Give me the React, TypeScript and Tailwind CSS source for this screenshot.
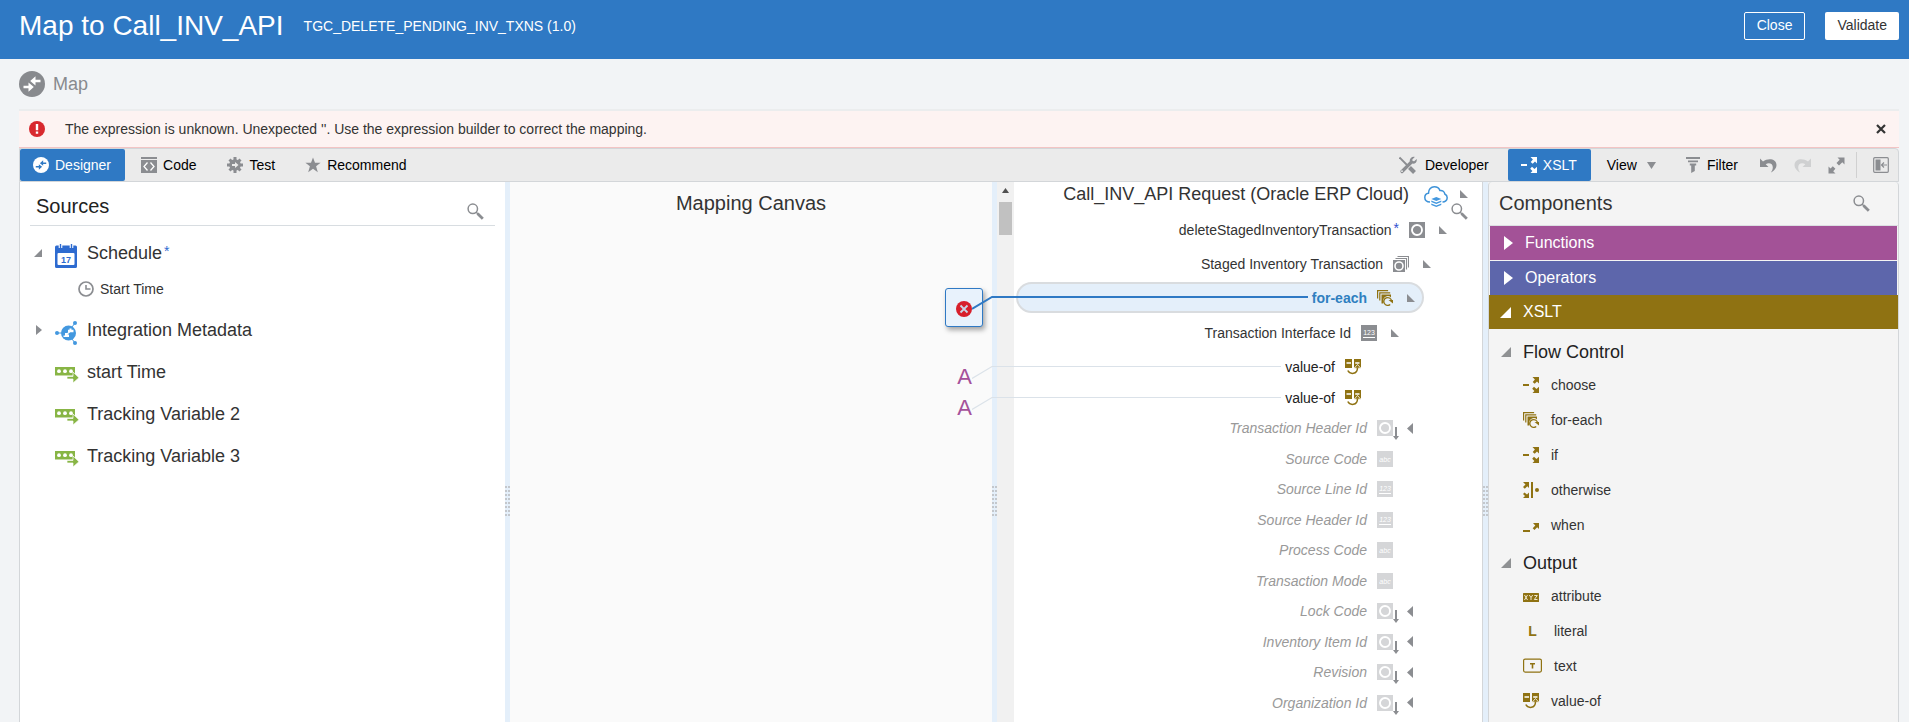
import type { ReactNode } from "react";

const GREY = "#8b8d91";
const GOLD = "#8f7212";

/* ---------- arrows and glyphs ---------- */

const EXCHANGE = "M11.200 10L16.500 5.200V8.800H21.500V11.200H16.500V14.400zM14.800 16L9.500 20.800V17.200H4.500V14.800H9.500V11.600z";

function MapIcon() {
  return (
    <svg className="size-[26px]" viewBox="0 0 26 26" aria-hidden="true">
      <circle cx="13" cy="13" r="13" fill="#888a8e" />
      <path d={EXCHANGE} fill="#fff" />
    </svg>
  );
}

function DesignerIcon() {
  return (
    <svg className="size-4" viewBox="0 0 26 26" aria-hidden="true">
      <circle cx="13" cy="13" r="13" fill="#fff" />
      <path d={EXCHANGE} fill="#2f79c4" />
    </svg>
  );
}

function CodeIcon() {
  return (
    <svg className="size-4" viewBox="0 0 16 16" aria-hidden="true">
      <path d="M0 0h16v2H0zM0 3h16v13H0z" fill={GREY} />
      <path d="M6.500 5.500L3 9.500l3.500 4M9.500 5.500L13 9.500l-3.500 4" fill="none" stroke="#fff" strokeWidth="1.300" />
    </svg>
  );
}

function TestIcon() {
  return (
    <svg className="size-4" viewBox="0 0 16 16" aria-hidden="true">
      <g stroke={GREY} strokeWidth="3">
        <path d="M8 0v16M0 8h16M2.500 2.500l11 11M13.500 2.500l-11 11" />
      </g>
      <circle cx="8" cy="8" r="5.800" fill={GREY} />
      <path d="M5 7h3V5l3.500 3L8 11V9H5z" fill="#ebebeb" />
    </svg>
  );
}

function StarIcon() {
  return (
    <svg className="size-4" viewBox="0 0 16 16" aria-hidden="true">
      <path d="M8 .5l2 5.300h5.600l-4.500 3.500 1.700 6L8 11.800l-4.800 3.500 1.700-6L.4 5.800H6z" fill={GREY} />
    </svg>
  );
}

function DeveloperIcon() {
  return (
    <svg className="size-[18px]" viewBox="0 0 18 18" aria-hidden="true">
      <path d="M.5 1.500l8 8" stroke={GREY} strokeWidth="1.800" />
      <path d="M10.500 11.500l5 5" stroke={GREY} strokeWidth="4" />
      <path d="M3 15.500l9-9" stroke={GREY} strokeWidth="3.200" strokeLinecap="round" />
      <path d="M15.800.9l-2.500 2.500.3 1.600 1.600.3 2.500-2.300c.6 3-1.700 5.200-4.700 4.500L10.800 5.500C10.300 2.500 12.800.2 15.800.9z" fill={GREY} />
      <circle cx="3" cy="15.200" r=".9" fill="#ebebeb" />
    </svg>
  );
}

function Branch({ color }: { color: string }) {
  return (
    <svg className="size-4 shrink-0" viewBox="0 0 16 16" aria-hidden="true">
      <path d="M0 7h6v2H0z" fill={color} />
      <path d="M9.500 0h6.500v6.500l-2-1.900-2.300 2.200-2-1.900 2.200-2.400z" fill={color} />
      <path d="M16 16H9.500l1.900-2-2.200-2.300 1.800-1.900 2.500 2.200 2.500-2.200z" fill={color} />
    </svg>
  );
}

function OtherwiseIcon() {
  return (
    <svg className="size-4" viewBox="0 0 16 16" aria-hidden="true">
      <g fill={GOLD}>
        <path d="M0 0h6v6L4.300 4.300 1.800 6.800 0 5l2.500-2.500zM6 16H0l2-2-2-2 1.500-1.500 2.500 2 2-2zM8 0h2v16H8z" />
        <circle cx="14" cy="8" r="2" />
      </g>
    </svg>
  );
}

function WhenIcon() {
  return (
    <svg className="size-4" viewBox="0 0 16 16" aria-hidden="true">
      <path d="M0 13h7v2H0zM10 6h6v6l-1.800-1.700L11.500 13 9.700 11.200l2.600-2.600z" fill={GOLD} />
    </svg>
  );
}

function ForEachIcon() {
  return (
    <svg className="size-4 shrink-0" viewBox="0 0 16 16" aria-hidden="true">
      <path d="M.6 8.500V.6h10.500M2.800 10.500V2.900h10.400" fill="none" stroke={GOLD} strokeWidth="1.200" />
      <path d="M4.500 4.500h9.500v3a4.500 4.500 0 0 0-7.500 4.500l-.500 1.500H4.500z" fill={GOLD} />
      <path d="M14.500 10.500a3.900 3.900 0 1 0-1.300 4" fill="none" stroke={GOLD} strokeWidth="1.300" />
      <path d="M11.500 10h4.500v3.500z" fill={GOLD} />
    </svg>
  );
}

function ValueOfIcon() {
  return (
    <svg className="size-4 shrink-0" viewBox="0 0 16 16" aria-hidden="true">
      <path d="M0 0h7v9H0zM9 0h7v9H9z" fill={GOLD} />
      <path d="M1.500 4h4.500M10.200 4h4.300" stroke="#fff" strokeWidth="1.300" />
      <path d="M12.500 5.500l-3.300 3.700h6.600z" fill={GOLD} stroke="#fff" strokeWidth=".8" />
      <path d="M2.800 11.500c2 4 9.700 4.500 9.700-3" fill="none" stroke={GOLD} strokeWidth="1.500" />
    </svg>
  );
}

function AttributeIcon() {
  return (
    <svg className="size-4" viewBox="0 0 16 16" aria-hidden="true">
      <rect y="5" width="16" height="9" rx=".5" fill={GOLD} />
      <path d="M1.500 7l3 5M4.500 7l-3 5M6.300 7L8 9.500 9.700 7M8 9.500V12M11.300 7.500h3l-3 4h3.200" fill="none" stroke="#f0e8d0" strokeWidth="1" />
    </svg>
  );
}

function TextIcon() {
  return (
    <svg className="h-[15px] w-[19px]" viewBox="0 0 19 15" aria-hidden="true">
      <rect x=".6" y="1.100" width="17.800" height="13" rx="1.500" fill="none" stroke={GOLD} strokeWidth="1.200" />
      <path d="M7 5h5v1.500h-1.700V10.500H8.700V6.500H7z" fill={GOLD} />
    </svg>
  );
}

function RingIcon({ faded = false }: { faded?: boolean }) {
  return (
    <svg className="size-4 shrink-0" viewBox="0 0 16 16" aria-hidden="true">
      <rect width="16" height="16" fill={faded ? "#d5d6d8" : GREY} />
      <circle cx="8" cy="8" r="5" fill="none" stroke="#fff" strokeWidth="1.900" />
    </svg>
  );
}

function StackedRingIcon() {
  return (
    <svg className="size-4 shrink-0" viewBox="0 0 16 16" aria-hidden="true">
      <path d="M4.500.5H15.500V11.500M2.500 2.500H13.500V13.500" fill="none" stroke={GREY} strokeWidth="1.100" />
      <rect y="4" width="12" height="12" fill={GREY} />
      <circle cx="6" cy="10" r="4" fill={GREY} stroke="#fff" strokeWidth="1.600" />
    </svg>
  );
}

function TypeIcon({ text, faded = false }: { text: "123" | "abc"; faded?: boolean }) {
  return (
    <svg className="size-4 shrink-0" viewBox="0 0 16 16" aria-hidden="true">
      <rect width="16" height="16" fill={faded ? "#d5d6d8" : GREY} />
      <text
        x="8"
        y={text === "123" ? 10 : 11}
        textAnchor="middle"
        fontFamily="Liberation Sans, sans-serif"
        fontSize="7"
        fill="#fff"
      >
        {text}
      </text>
      {text === "123" && <path d="M2 12.500h12" stroke="#fff" strokeWidth="1" />}
    </svg>
  );
}

function SearchIcon() {
  return (
    <svg className="size-[17px]" viewBox="0 0 17 17" aria-hidden="true">
      <circle cx="5.800" cy="5.800" r="4.700" fill="none" stroke={GREY} strokeWidth="1.500" />
      <path d="M9 9l2 2" stroke={GREY} strokeWidth="1.400" />
      <path d="M10.500 10.500l5.300 5.300" stroke={GREY} strokeWidth="2.800" />
    </svg>
  );
}

function CalendarIcon() {
  return (
    <svg className="h-6 w-[22px]" viewBox="0 0 22 24" aria-hidden="true">
      <path d="M1.500 1.500H20.500A1.500 1.500 0 0 1 22 3v19.500A1.500 1.500 0 0 1 20.500 24h-19A1.500 1.500 0 0 1 0 22.500V3a1.500 1.500 0 0 1 1.500-1.500z" fill="#2e6bd0" />
      <rect x="2.500" y="9" width="17" height="12" rx="1" fill="#fff" />
      <path d="M5.500 0v4M16.500 0v4" stroke="#fff" strokeWidth="3.600" />
      <path d="M5.500 0v4M16.500 0v4" stroke="#2e6bd0" strokeWidth="1.400" />
      <text x="11" y="18.500" textAnchor="middle" fontFamily="Liberation Sans, sans-serif" fontWeight="bold" fontSize="9" fill="#2e6bd0">
        17
      </text>
    </svg>
  );
}

function MetadataIcon() {
  return (
    <svg className="h-6 w-[22px]" viewBox="0 0 22 24" aria-hidden="true">
      <g fill="#4398df">
        <circle cx="13.500" cy="12" r="7.500" />
        <circle cx="2" cy="12" r="2" />
        <circle cx="20" cy="2" r="2" />
        <circle cx="20" cy="22" r="2" />
      </g>
      <path d="M2 12h4M20 2l-3 4M20 22l-3-4" stroke="#4398df" />
      <path d="M13 8.800h1.500v-1.300h2v1.300h2v2.400h-5.500zM8.500 14.500h1.500V12h2.500v1.500h1.500v2.400h-5.500z" fill="#fff" />
      <path d="M11.500 13.500l3.500-3" stroke="#fff" strokeWidth="1.200" />
    </svg>
  );
}

function VariableIcon() {
  return (
    <svg className="h-4 w-6" viewBox="0 0 24 16" aria-hidden="true">
      <path d="M0 0h20v8.500H0z" fill="#88b545" />
      <g fill="#fff">
        <circle cx="4" cy="4.200" r="1.900" />
        <circle cx="10" cy="4.200" r="1.900" />
        <circle cx="16" cy="4.200" r="1.900" />
      </g>
      <path d="M12 9.400h6V5l6 5.700-6 5.300v-4h-6z" fill="#88b545" stroke="#fff" strokeWidth=".7" />
    </svg>
  );
}

function CloudIcon() {
  return (
    <svg className="h-[22px] w-6" viewBox="0 0 24 22" aria-hidden="true">
      <path
        d="M6 16C2.500 16 .8 14 .8 11.500S2.700 7.400 4.500 7.200C4.500 3.500 7 .8 10.300.8c2.700 0 4.800 1.500 5.600 3.700 2.600-.5 4.700 1.300 4.900 3.500 1.500.7 2.400 2 2.400 3.700C23.200 14.300 21 16 18.500 16"
        fill="none"
        stroke="#3d92d8"
        strokeWidth="1.500"
      />
      <path d="M12.300 11l5 2-5 2-5-2zM7.300 14.500l5 2 5-2v1.600l-5 2-5-2zM7.300 17.500l5 2 5-2v1.600l-5 2-5-2z" fill="#4398df" />
    </svg>
  );
}

function ClockIcon() {
  return (
    <svg className="size-4" viewBox="0 0 16 16" aria-hidden="true">
      <circle cx="8" cy="8" r="7" fill="none" stroke={GREY} strokeWidth="1.700" />
      <path d="M8 4v4h4.500" fill="none" stroke={GREY} strokeWidth="1.600" />
    </svg>
  );
}

type TriangleKind = "openLeft" | "openRight" | "right" | "left";

function Triangle({ kind, className }: { kind: TriangleKind; className: string }) {
  const shapes: Record<TriangleKind, string> = {
    openLeft: "M10 0v10H0z",
    openRight: "M0 0l10 10H0z",
    right: "M0 0l10 5L0 10z",
    left: "M10 0L0 5l10 5z",
  };
  return (
    <svg className={className} viewBox="0 0 10 10" preserveAspectRatio="none" fill="currentColor" aria-hidden="true">
      <path d={shapes[kind]} />
    </svg>
  );
}

/* ---------- shared pieces ---------- */

function Splitter() {
  return (
    <div className="w-[5px] shrink-0 bg-[#e4effa] pt-76" role="separator" aria-orientation="vertical">
      <svg className="h-8 w-[5px]" viewBox="0 0 5 32" fill="#c3c7cc" aria-hidden="true">
        {[0, 4, 8, 12, 16, 20, 24, 28].map((y) => (
          <path key={y} d={`M0 ${y}h2v2H0zM3 ${y}h2v2H3z`} />
        ))}
      </svg>
    </div>
  );
}

function ToolbarButton({ icon, label, className }: { icon: ReactNode; label: string; className: string }) {
  return (
    <button type="button" className={`flex h-8 items-center text-sm ${className}`}>
      {icon}
      {label}
    </button>
  );
}

/* ---------- header, banner, toolbar ---------- */

function Header() {
  return (
    <header className="flex h-[59px] items-start bg-[#2f79c4] pr-2.5 pl-[19px] text-white">
      <h1 className="text-[28px] leading-[52px]">Map to Call_INV_API</h1>
      <span className="ml-5 text-sm leading-[52px]">TGC_DELETE_PENDING_INV_TXNS (1.0)</span>
      <div className="mt-3 ml-auto flex gap-5">
        <button type="button" className="h-7 rounded-[2px] border border-white px-3 pb-0.5 text-sm">
          Close
        </button>
        <button type="button" className="h-7 rounded-[2px] bg-white px-3 pb-0.5 text-sm text-[#333]">
          Validate
        </button>
      </div>
    </header>
  );
}

function ErrorBanner() {
  return (
    <div role="alert" className="flex h-[39px] items-center border-t-2 border-b border-t-[#ebedee] border-b-[#f3c4c4] bg-[#fdf3f2] pr-[13px] pl-2.5">
      <svg className="size-4" viewBox="0 0 16 16" aria-hidden="true">
        <circle cx="8" cy="8" r="8" fill="#d8292f" />
        <path d="M6.800 3h2.400v6.200H6.800zM6.800 10.500h2.400v2.300H6.800z" fill="#fff" />
      </svg>
      <p className="ml-5 text-sm text-[#333]">
        The expression is unknown. Unexpected ''. Use the expression builder to correct the mapping.
      </p>
      <button type="button" aria-label="Dismiss" className="ml-auto">
        <svg className="size-[10px]" viewBox="0 0 10 10" aria-hidden="true">
          <path d="M1 1l8 8M9 1L1 9" stroke="#333" strokeWidth="2.200" />
        </svg>
      </button>
    </div>
  );
}

function Toolbar() {
  return (
    <div className="flex h-[34px] items-center rounded-tr border border-[#d3d6d9] bg-[#ebebeb] text-black">
      <ToolbarButton className="gap-1.5 rounded-[2px] bg-[#2f79c4] pr-3.5 pl-[13px] text-white" icon={<DesignerIcon />} label="Designer" />
      <ToolbarButton className="ml-4 gap-1.5" icon={<CodeIcon />} label="Code" />
      <ToolbarButton className="ml-[30px] gap-[7px]" icon={<TestIcon />} label="Test" />
      <ToolbarButton className="ml-[30px] gap-1.5" icon={<StarIcon />} label="Recommend" />

      <div className="ml-auto flex h-8 items-center">
        <ToolbarButton className="gap-2" icon={<DeveloperIcon />} label="Developer" />
        <ToolbarButton className="ml-[19px] gap-1.5 rounded-[2px] bg-[#2f79c4] pr-3.5 pl-[13px] text-white" icon={<Branch color="#fff" />} label="XSLT" />
        <button type="button" className="ml-4 flex items-center gap-2.5 text-sm">
          View
          <svg className="h-[7px] w-[9px]" viewBox="0 0 9 7" aria-hidden="true">
            <path d="M0 0h9L4.500 7z" fill={GREY} />
          </svg>
        </button>
        <ToolbarButton
          className="ml-[30px] gap-[7px]"
          icon={
            <svg className="h-4 w-[14px]" viewBox="0 0 14 16" aria-hidden="true">
              <path d="M0 1h14M2 4.300h10M3.800 7.500h6.400" stroke={GREY} strokeWidth="1.800" />
              <path d="M5.200 7h3.600v7l-3.600 2z" fill={GREY} />
            </svg>
          }
          label="Filter"
        />
        <button type="button" aria-label="Undo" className="ml-[22px]">
          <svg className="size-[17px]" viewBox="0 0 17 17" aria-hidden="true">
            <path d="M0 1.500V10h8.500L5.700 7.200C9 5.200 13 6.500 12.800 10.500c-.1 2-.8 3.500-1.800 5 2.500-1.500 5.500-4 5.500-7.500C16.500 2 8.500.5 3 4.500z" fill={GREY} />
          </svg>
        </button>
        <button type="button" aria-label="Redo" disabled className="ml-[17px]">
          <svg className="size-[17px]" viewBox="0 0 17 17" aria-hidden="true">
            <path transform="translate(17 0) scale(-1 1)" d="M0 1.500V10h8.500L5.700 7.200C9 5.200 13 6.500 12.800 10.500c-.1 2-.8 3.500-1.800 5 2.500-1.500 5.500-4 5.500-7.500C16.500 2 8.500.5 3 4.500z" fill="#cfd0d1" />
          </svg>
        </button>
        <button type="button" aria-label="Maximize" className="ml-[17px]">
          <svg className="size-[17px]" viewBox="0 0 17 17" aria-hidden="true">
            <path d="M9.500.5h7v7l-2.200-2.200-3.300 3.200-2.500-2.500 3.200-3.300zM7.500 16.500h-7v-7l2 2L4.800 9.200l2.600 2.600-2.200 2.400z" fill={GREY} />
          </svg>
        </button>
        <span className="mr-4 ml-[11px] h-[26px] w-px bg-[#d0d0d0]" />
        <button type="button" aria-label="Toggle components panel" className="mr-[9px]">
          <svg className="size-4" viewBox="0 0 16 16" aria-hidden="true">
            <rect x=".7" y=".7" width="14.600" height="14.600" rx="1" fill="none" stroke={GREY} strokeWidth="1.200" />
            <path d="M2.500 2.500h5v11h-5z" fill={GREY} />
            <path d="M9 8h5M11 5.500L8.500 8l2.500 2.500" fill="none" stroke={GREY} strokeWidth="1.200" />
          </svg>
        </button>
      </div>
    </div>
  );
}

/* ---------- sources ---------- */

function SourceRow({ toggle, icon, label, required }: { toggle?: ReactNode; icon: ReactNode; label: string; required?: boolean }) {
  return (
    <div className="flex h-[42px] items-center pl-[14px]">
      <span className="w-[21px]">{toggle}</span>
      <span className="flex w-8 pt-1.5">{icon}</span>
      <span className="text-lg">{label}</span>
      {required && <span className="mb-1 ml-0.5 text-sm text-[#2e6bd0]">*</span>}
    </div>
  );
}

function Sources() {
  return (
    <section className="min-w-0 flex-[485_1_0px] border-l border-[#d3d6d9] bg-white">
      <div className="mr-2.5 ml-2.5 flex h-11 items-start justify-between border-b border-[#d8dde1] pr-[11px] pl-1.5">
        <h2 className="text-xl leading-[48px] text-[#222]">Sources</h2>
        <button type="button" aria-label="Search sources" className="mt-[21px]">
          <SearchIcon />
        </button>
      </div>
      <ul className="pt-1.5 text-[#333]">
        <li>
          <SourceRow
            toggle={
              <button type="button" aria-label="Collapse Schedule" className="block text-[#8b8d91]">
                <Triangle kind="openLeft" className="size-2" />
              </button>
            }
            icon={<CalendarIcon />}
            label="Schedule"
            required
          />
          <ul>
            <li className="flex h-[30px] items-center gap-1.5 pl-[58px] text-sm">
              <ClockIcon />
              Start Time
            </li>
          </ul>
        </li>
        <li className="mt-[5px]">
          <SourceRow
            toggle={
              <button type="button" aria-label="Expand Integration Metadata" className="ml-0.5 block text-[#8b8d91]">
                <Triangle kind="right" className="h-2.5 w-1.5" />
              </button>
            }
            icon={<MetadataIcon />}
            label="Integration Metadata"
          />
        </li>
        {["start Time", "Tracking Variable 2", "Tracking Variable 3"].map((name) => (
          <li key={name}>
            <SourceRow icon={<VariableIcon />} label={name} />
          </li>
        ))}
      </ul>
    </section>
  );
}

/* ---------- canvas ---------- */

function MappingCanvas() {
  return (
    <section className="relative min-w-0 flex-[482_1_0px] bg-[#fafafa]">
      <h2 className="pt-[7px] text-center text-xl leading-7 text-[#333]">Mapping Canvas</h2>
      <button
        type="button"
        aria-label="Mapping error"
        className="absolute top-[106px] right-[9px] flex h-[39px] w-[38px] items-center justify-center rounded-[3px] border border-[#2f79c4] bg-[#e8f2fc] shadow-[2px_3px_5px_rgba(0,0,0,0.35)]"
      >
        <svg className="mt-0.5 size-4" viewBox="0 0 16 16" aria-hidden="true">
          <circle cx="8" cy="8" r="8" fill="#d71f2b" />
          <path d="M4.500 4.500l7 7M11.500 4.500l-7 7" stroke="#c9d6e6" strokeWidth="1.800" />
        </svg>
      </button>
      <span className="absolute top-[181px] right-5 text-[22px] leading-7 text-[#a5519a]">A</span>
      <span className="absolute top-[212px] right-5 text-[22px] leading-7 text-[#a5519a]">A</span>
    </section>
  );
}

/* ---------- target ---------- */

function ActiveConnector() {
  return (
    <svg className="absolute top-3 -left-[46px] z-10 h-[14px] w-[46px]" viewBox="0 0 46 14" aria-hidden="true">
      <path d="M0 13L20 1h26" fill="none" stroke="#2f79c4" strokeWidth="2" />
    </svg>
  );
}

function Connector() {
  return (
    <svg className="absolute top-[14px] -left-[42px] z-10 h-[14px] w-[42px]" viewBox="0 0 42 14" aria-hidden="true">
      <path d="M0 13.500L20 1.500h22" fill="none" stroke="#dbe2e9" strokeWidth="1.200" />
    </svg>
  );
}

function MoreIcon() {
  return (
    <span className="relative">
      <RingIcon faded />
      <svg className="absolute top-[7px] -right-1.5 h-[13px] w-1.5" viewBox="0 0 6 13" aria-hidden="true">
        <path d="M2 0h2v9h2l-3 4-3-4h2z" fill={GREY} />
      </svg>
    </span>
  );
}

function OpenToggle({ label }: { label: string }) {
  return (
    <button type="button" aria-label={`Collapse ${label}`} className="text-[#8b8d91]">
      <Triangle kind="openRight" className="size-2" />
    </button>
  );
}

const unmapped: { name: string; kind: "more" | "abc" | "123" }[] = [
  { name: "Transaction Header Id", kind: "more" },
  { name: "Source Code", kind: "abc" },
  { name: "Source Line Id", kind: "123" },
  { name: "Source Header Id", kind: "123" },
  { name: "Process Code", kind: "abc" },
  { name: "Transaction Mode", kind: "abc" },
  { name: "Lock Code", kind: "more" },
  { name: "Inventory Item Id", kind: "more" },
  { name: "Revision", kind: "more" },
  { name: "Organization Id", kind: "more" },
];

function Target() {
  return (
    <section className="flex min-w-0 flex-[485_1_0px] border-r border-[#d3d6d9] bg-white">
      <div className="flex w-[17px] shrink-0 flex-col items-center bg-[#f1f1f1] pt-1.5">
        <svg className="h-[5px] w-[7px]" viewBox="0 0 7 5" aria-hidden="true">
          <path d="M3.500 0L7 5H0z" fill="#505050" />
        </svg>
        <span className="mt-[9px] h-[33px] w-[13px] bg-[#c1c1c1]" />
      </div>
      <div className="relative min-w-0 flex-1 text-sm text-[#333]">
        <div className="mb-[7px] flex h-6 items-center justify-end pr-[14px] whitespace-nowrap">
          <h2 className="text-lg leading-6 text-[#333]">Call_INV_API Request (Oracle ERP Cloud)</h2>
          <span className="ml-[15px] pt-1.5">
            <CloudIcon />
          </span>
          <span className="ml-3 flex">
            <OpenToggle label="Call_INV_API Request" />
          </span>
        </div>
        <button type="button" aria-label="Search target" className="absolute top-[21px] right-[14px]">
          <SearchIcon />
        </button>

        <ul>
          <li className="flex h-[34px] items-center justify-end pr-[35px]">
            deleteStagedInventoryTransaction
            <span className="mb-1 ml-0.5 text-[#2e4fd0]">*</span>
            <span className="mr-[14px] ml-2.5">
              <RingIcon />
            </span>
            <OpenToggle label="deleteStagedInventoryTransaction" />
          </li>
          <li className="flex h-[34px] items-center justify-end pr-[51px]">
            Staged Inventory Transaction
            <span className="mr-[14px] ml-2.5">
              <StackedRingIcon />
            </span>
            <OpenToggle label="Staged Inventory Transaction" />
          </li>
          <li className="relative mt-px mr-[58px] mb-0.5 ml-0.5 flex h-[31px] items-center rounded-full border-2 border-[#d9dcdf] bg-[#e4effa] pr-[7px]">
            <ActiveConnector />
            <span className="mb-px h-0.5 flex-1 bg-[#2f79c4]" />
            <span className="ml-1 font-bold text-[#2f7fc0]">for-each</span>
            <span className="mr-[14px] ml-2.5">
              <ForEachIcon />
            </span>
            <OpenToggle label="for-each" />
          </li>
          <li className="flex h-9 items-center justify-end pr-[83px]">
            Transaction Interface Id
            <span className="mr-[14px] ml-2.5">
              <TypeIcon text="123" />
            </span>
            <OpenToggle label="Transaction Interface Id" />
          </li>
          {[0, 1].map((row) => (
            <li key={row} className="relative flex h-[31px] items-center pr-[121px]">
              <Connector />
              <span className="h-px flex-1 bg-[#dbe2e9]" />
              <span className="mr-2.5 ml-1 text-[#222]">value-of</span>
              <ValueOfIcon />
            </li>
          ))}
          {unmapped.map(({ name, kind }) => (
            <li key={name} className="flex h-[30px] items-center justify-end pr-[69px] text-[#999] italic even:h-[31px]">
              {name}
              <span className="mr-[14px] ml-2.5">
                {kind === "more" ? <MoreIcon /> : <TypeIcon text={kind} faded />}
              </span>
              <span className="flex w-1.5">
                {kind === "more" && (
                  <button type="button" aria-label={`Expand ${name}`} className="text-[#8b8d91]">
                    <Triangle kind="left" className="h-[11px] w-1.5" />
                  </button>
                )}
              </span>
            </li>
          ))}
        </ul>
      </div>
    </section>
  );
}

/* ---------- components ---------- */

function Leaf({ icon, label, wide = false }: { icon: ReactNode; label: string; wide?: boolean }) {
  return (
    <li className="flex h-[35px] items-center pl-[34px] text-sm">
      <span className={`flex ${wide ? "w-[31px]" : "w-7"}`}>{icon}</span>
      {label}
    </li>
  );
}

function GroupHeading({ label }: { label: string }) {
  return (
    <h3 className="pt-1.5">
      <button type="button" className="flex h-[30px] items-center gap-3 pl-3 text-lg text-[#222]">
        <span className="text-[#8f9193]">
          <Triangle kind="openLeft" className="size-2.5" />
        </span>
        {label}
      </button>
    </h3>
  );
}

function Components() {
  return (
    <section className="min-w-0 flex-[409_1_0px] rounded-t border-x border-[#d3d6d9] bg-[#f4f4f4] text-[#333]">
      <div className="flex h-11 items-start justify-between border-b border-[#dcdfe2] pr-[28px] pl-2.5">
        <h2 className="text-xl leading-[42px]">Components</h2>
        <button type="button" aria-label="Search components" className="mt-[13px]">
          <SearchIcon />
        </button>
      </div>
      <button type="button" className="ml-px flex h-[34px] w-[calc(100%-2px)] items-center gap-3 bg-[#a35297] pl-[14px] text-white">
        <Triangle kind="right" className="h-[14px] w-[9px]" />
        Functions
      </button>
      <button type="button" className="mt-px ml-px flex h-[34px] w-[calc(100%-2px)] items-center gap-3 bg-[#5d66ab] pl-[14px] text-white">
        <Triangle kind="right" className="h-[14px] w-[9px]" />
        Operators
      </button>
      <button type="button" className="flex h-[34px] w-full items-center gap-3 bg-[#8f7212] pl-[11px] text-white">
        <Triangle kind="openLeft" className="size-[11px]" />
        XSLT
      </button>
      <div className="pt-0.5">
        <GroupHeading label="Flow Control" />
        <ul>
          <Leaf icon={<Branch color={GOLD} />} label="choose" />
          <Leaf icon={<ForEachIcon />} label="for-each" />
          <Leaf icon={<Branch color={GOLD} />} label="if" />
          <Leaf icon={<OtherwiseIcon />} label="otherwise" />
          <Leaf icon={<WhenIcon />} label="when" />
        </ul>
        <GroupHeading label="Output" />
        <ul>
          <Leaf icon={<AttributeIcon />} label="attribute" />
          <Leaf icon={<span className="w-[19px] text-center font-bold text-[#8f7212]" aria-hidden="true">L</span>} label="literal" wide />
          <Leaf icon={<TextIcon />} label="text" wide />
          <Leaf icon={<ValueOfIcon />} label="value-of" />
        </ul>
      </div>
    </section>
  );
}

export default function App() {
  return (
    <div className="flex h-screen flex-col overflow-hidden bg-[#f2f4f6] font-['Liberation_Sans',Arial,sans-serif]">
      <Header />
      <div className="flex h-[50px] shrink-0 items-center gap-2 pl-[19px]">
        <MapIcon />
        <span className="text-lg text-[#888a8e]">Map</span>
      </div>
      <main className="mr-2.5 ml-[19px] flex min-h-0 flex-1 flex-col">
        <div className="shrink-0">
          <ErrorBanner />
          <Toolbar />
        </div>
        <div className="flex min-h-0 flex-1">
          <Sources />
          <Splitter />
          <MappingCanvas />
          <Splitter />
          <Target />
          <Splitter />
          <Components />
        </div>
      </main>
    </div>
  );
}
